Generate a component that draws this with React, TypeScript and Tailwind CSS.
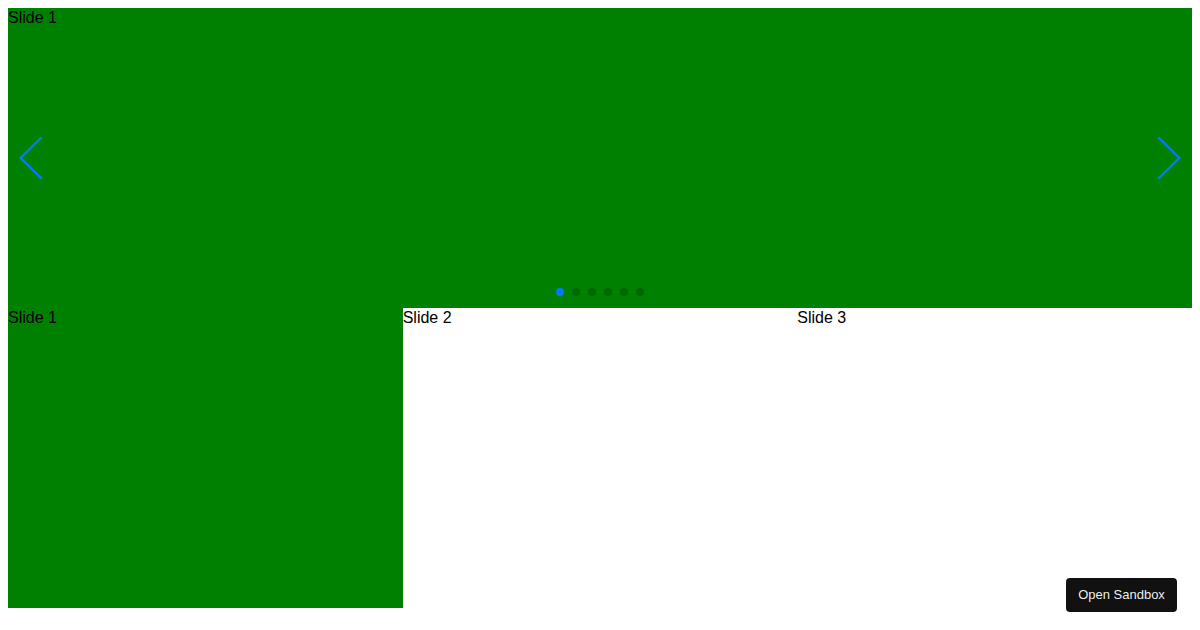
import React from 'react';

const THUMBS = ['Slide 1', 'Slide 2', 'Slide 3'];

const Arrow: React.FC<{ dir: 'left' | 'right' }> = ({ dir }) => (
  <svg width="24" height="44" viewBox="0 0 24 44" fill="none">
    <path
      d={dir === 'left' ? 'M22 2 L1.5 22 L22 42' : 'M2 2 L22.5 22 L2 42'}
      stroke="#007aff"
      strokeWidth="2.4"
      strokeLinecap="round"
      strokeLinejoin="round"
    />
  </svg>
);

export default function App() {
  return (
    <div className="w-[1200px] h-[630px] bg-white p-2 relative font-['Liberation_Sans',Arial,sans-serif] text-base text-black">
      {/* Main slider */}
      <div className="relative h-[300px] bg-[#008000]">
        <div className="leading-[19px]">Slide 1</div>
        <div className="absolute inset-x-0 top-[128px] flex justify-between px-[11px]">
          <button>
            <Arrow dir="left" />
          </button>
          <button>
            <Arrow dir="right" />
          </button>
        </div>
        <div className="absolute bottom-3 left-0 right-0 flex justify-center gap-2">
          {[0, 1, 2, 3, 4, 5].map((i) => (
            <span
              key={i}
              className={i === 0 ? 'w-2 h-2 rounded-full bg-[#007aff]' : 'w-2 h-2 rounded-full bg-black/20'}
            />
          ))}
        </div>
      </div>

      {/* Thumbnails */}
      <div className="grid grid-cols-3 h-[300px]">
        {THUMBS.map((t, i) => (
          <div key={t} className={i === 0 ? 'bg-[#008000]' : 'bg-white'}>
            <div className="leading-[19px]">{t}</div>
          </div>
        ))}
      </div>

      <button className="absolute right-[23px] bottom-[18px] w-[111px] h-[34px] rounded-[4px] bg-[#111111] text-[13px] text-white/95">
        Open Sandbox
      </button>
    </div>
  );
}
